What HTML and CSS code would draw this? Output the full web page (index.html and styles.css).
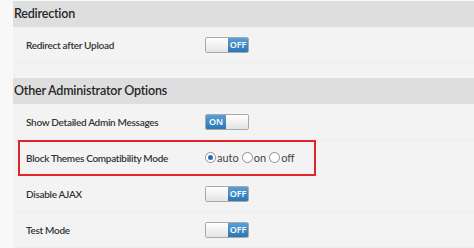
FILE: index.html
```html
<!DOCTYPE html>
<html>
<head>
<meta charset="utf-8">
<link rel="stylesheet" href="styles.css">
</head>
<body>
<div class="page">
  <section class="section">
    <h3 class="section-title">Redirection</h3>
    <div class="row">
      <div class="label">Redirect after Upload</div>
      <div class="control"><span class="toggle off"><span class="knob"></span><span class="state">OFF</span></span></div>
    </div>
    <div class="spacer"></div>
  </section>
  <section class="section">
    <h3 class="section-title">Other Administrator Options</h3>
    <div class="row">
      <div class="label">Show Detailed Admin Messages</div>
      <div class="control"><span class="toggle on"><span class="state">ON</span><span class="knob"></span></span></div>
    </div>
    <div class="row highlight">
      <div class="label">Block Themes Compatibility Mode</div>
      <div class="control radios">
        <label class="radio"><span class="dot checked"></span>auto</label>
        <label class="radio"><span class="dot"></span>on</label>
        <label class="radio"><span class="dot"></span>off</label>
      </div>
    </div>
    <div class="row">
      <div class="label">Disable AJAX</div>
      <div class="control"><span class="toggle off"><span class="knob"></span><span class="state">OFF</span></span></div>
    </div>
    <div class="row">
      <div class="label">Test Mode</div>
      <div class="control"><span class="toggle off"><span class="knob"></span><span class="state">OFF</span></span></div>
    </div>
  </section>
</div>
</body>
</html>
```
FILE: styles.css
```css
html, body {
  margin: 0;
  padding: 0;
  background: #f8f8f8;
}
body {
  font-family: Lato, "Open Sans", "Liberation Sans", sans-serif;
  color: #333;
}
.page {
  padding: 1px 0 0 13px;
}
.section {
  background: #f3f3f3;
}
.section-title {
  margin: 0;
  height: 26px;
  line-height: 26px;
  background: #dedede;
  font-size: 12.5px;
  font-weight: 600;
  letter-spacing: -0.2px;
  color: #262626;
  padding-left: 1px;
}
.spacer {
  height: 15px;
}
.row {
  display: flex;
  align-items: center;
  height: 36px;
  padding-left: 13px;
  border-bottom: 1px solid #eeeeee;
  box-sizing: border-box;
}
.row.highlight {
  outline: 2px solid #e0262b;
  outline-offset: -2px;
  width: 298px;
  margin-left: 5px;
  padding-left: 8px;
}
.label {
  width: 179px;
  font-size: 10px;
  font-weight: 600;
  letter-spacing: -0.3px;
  color: #333;
}
.control {
  display: flex;
  align-items: center;
}
.toggle {
  display: inline-flex;
  width: 44px;
  height: 16px;
  border: 1px solid #a9a9a9;
  border-radius: 2px;
  overflow: hidden;
  box-sizing: border-box;
}
.knob {
  width: 22px;
  height: 100%;
  background: linear-gradient(#ffffff, #e4e4e4);
}
.state {
  flex: 1;
  height: 100%;
  background: linear-gradient(#5a9fd6, #2a77b6);
  color: #fff;
  font-family: "Open Sans", sans-serif;
  font-size: 9px;
  font-weight: 600;
  line-height: 14px;
  text-align: center;
}
.radios {
  gap: 3px;
  font-size: 11px;
  color: #444;
}
.radio {
  display: inline-flex;
  align-items: center;
}
.dot {
  width: 9px;
  height: 9px;
  border: 1px solid #8f8f8f;
  border-radius: 50%;
  background: #fff;
  margin-right: 1px;
  position: relative;
}
.dot.checked::after {
  content: "";
  position: absolute;
  left: 2px;
  top: 2px;
  width: 5px;
  height: 5px;
  border-radius: 50%;
  background: #2b6cb0;
}
```
